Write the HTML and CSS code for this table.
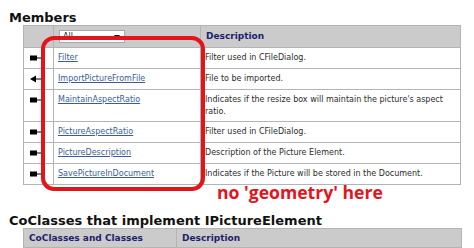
FILE: index.html
```html
<!DOCTYPE html>
<html>
<head>
<meta charset="utf-8">
<link rel="stylesheet" href="styles.css">
</head>
<body>
<div class="page">
  <h2 class="heading heading-members">Members</h2>
  <table class="grid members">
    <colgroup><col class="c-icon"><col class="c-name"><col class="c-desc"></colgroup>
    <thead>
      <tr>
        <th></th>
        <th><div class="select"><span>All</span><span class="caret"></span></div></th>
        <th>Description</th>
      </tr>
    </thead>
    <tbody>
      <tr>
        <td class="icon"><svg width="16" height="12" viewBox="0 0 16 12"><rect x="0" y="3.5" width="7" height="5" fill="#000"/><rect x="7" y="5.5" width="8" height="1" fill="#000"/><rect x="14" y="3" width="1" height="6" fill="#000"/></svg></td>
        <td><a href="#">Filter</a></td>
        <td>Filter used in CFileDialog.</td>
      </tr>
      <tr>
        <td class="icon"><svg width="16" height="12" viewBox="0 0 16 12"><polygon points="0,6 6,2.5 6,9.5" fill="#000"/><rect x="5" y="5.5" width="10" height="1" fill="#000"/><rect x="14" y="3" width="1" height="6" fill="#000"/></svg></td>
        <td><a href="#">ImportPictureFromFile</a></td>
        <td>File to be imported.</td>
      </tr>
      <tr>
        <td class="icon"><svg width="16" height="12" viewBox="0 0 16 12"><rect x="0" y="3.5" width="7" height="5" fill="#000"/><rect x="7" y="5.5" width="6" height="1" fill="#000"/><rect x="12" y="2.5" width="3" height="7" fill="#000"/></svg></td>
        <td><a href="#">MaintainAspectRatio</a></td>
        <td>Indicates if the resize box will maintain the picture's aspect ratio.</td>
      </tr>
      <tr>
        <td class="icon"><svg width="16" height="12" viewBox="0 0 16 12"><rect x="0" y="3.5" width="7" height="5" fill="#000"/><rect x="7" y="5.5" width="8" height="1" fill="#000"/><rect x="14" y="3" width="1" height="6" fill="#000"/></svg></td>
        <td><a href="#">PictureAspectRatio</a></td>
        <td>Filter used in CFileDialog.</td>
      </tr>
      <tr>
        <td class="icon"><svg width="16" height="12" viewBox="0 0 16 12"><rect x="0" y="3.5" width="7" height="5" fill="#000"/><rect x="7" y="5.5" width="8" height="1" fill="#000"/><rect x="14" y="3" width="1" height="6" fill="#000"/></svg></td>
        <td><a href="#">PictureDescription</a></td>
        <td>Description of the Picture Element.</td>
      </tr>
      <tr>
        <td class="icon"><svg width="16" height="12" viewBox="0 0 16 12"><rect x="0" y="3.5" width="7" height="5" fill="#000"/><rect x="7" y="5.5" width="6" height="1" fill="#000"/><rect x="12" y="2.5" width="3" height="7" fill="#000"/></svg></td>
        <td><a href="#">SavePictureInDocument</a></td>
        <td>Indicates if the Picture will be stored in the Document.</td>
      </tr>
    </tbody>
  </table>

  <h2 class="heading heading-coclasses">CoClasses that implement IPictureElement</h2>
  <table class="grid coclasses">
    <colgroup><col class="c-class"><col class="c-cdesc"></colgroup>
    <thead>
      <tr><th>CoClasses and Classes</th><th>Description</th></tr>
    </thead>
    <tbody>
      <tr><td>&nbsp;</td><td>&nbsp;</td></tr>
    </tbody>
  </table>

  <div class="callout"></div>
  <div class="note">no 'geometry' here</div>
</div>
</body>
</html>
```
FILE: styles.css
```css
html, body {
  margin: 0;
  padding: 0;
  background: #ffffff;
}
body {
  width: 474px;
  height: 248px;
  overflow: hidden;
  font-family: "DejaVu Sans", Verdana, sans-serif;
}
.page {
  position: relative;
  padding: 0 0 0 9px;
}
.heading {
  margin: 0;
  font-size: 13px;
  line-height: 15px;
  font-weight: bold;
  color: #111;
}
.heading-members {
  padding-top: 10px;
}
.heading-coclasses {
  margin-top: 28px;
}
.grid {
  margin-left: 14px;
  border-collapse: collapse;
  table-layout: fixed;
}
.members { width: 437px; }
.coclasses { width: 438px; }
.c-icon { width: 30px; }
.c-name { width: 147px; }
.c-desc { width: 260px; }
.c-class { width: 153px; }
.c-cdesc { width: 285px; }

.grid th,
.grid td {
  border: 1px solid #b4b4b4;
  padding: 4px;
  vertical-align: top;
  text-align: left;
  line-height: 12px;
}
.grid th {
  background: #cbcbcb;
  color: #1e1e6e;
  font-size: 9px;
  font-weight: bold;
  padding-left: 5px;
}
.grid td {
  font-size: 8px;
  line-height: 11.5px;
  color: #2c2c2c;
}
.grid td.icon {
  padding: 4px 0 4px 6px;
}
.icon svg {
  display: block;
}
.grid a {
  color: #3a5d96;
  text-decoration: underline;
}
.select {
  width: 57px;
  height: 11px;
  background: #fff;
  border: 1px solid #a8a8a8;
  display: flex;
  align-items: center;
  justify-content: space-between;
  padding: 0 4px 0 3px;
  color: #222;
  font-weight: normal;
  font-size: 8px;
  line-height: 11px;
}
.caret {
  width: 0;
  height: 0;
  border-left: 3px solid transparent;
  border-right: 3px solid transparent;
  border-top: 4px solid #111;
}
.coclasses th {
  padding-top: 3px;
  padding-bottom: 3px;
}
.callout {
  position: absolute;
  left: 41px;
  top: 36px;
  width: 156px;
  height: 147px;
  border: 4px solid #e2151d;
  border-radius: 13px;
}
.note {
  position: absolute;
  left: 217px;
  top: 182px;
  font-family: "Open Sans", sans-serif;
  font-weight: bold;
  font-size: 17.6px;
  line-height: 20px;
  color: #e2151d;
  white-space: nowrap;
}
```
